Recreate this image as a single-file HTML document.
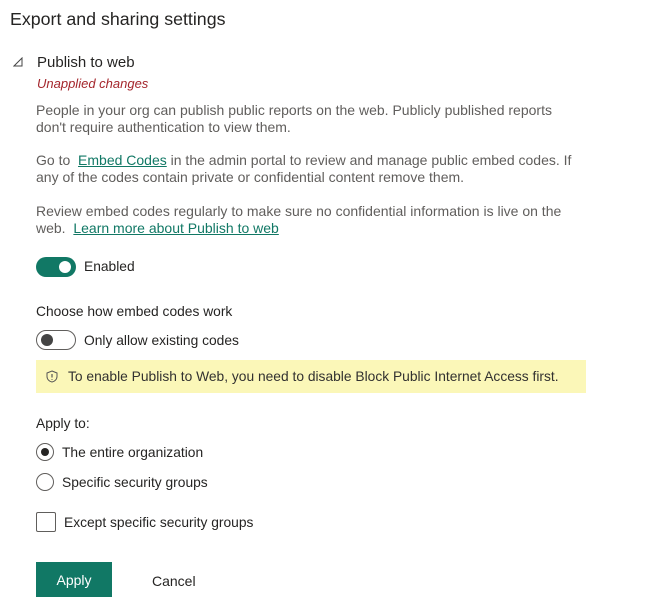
<!DOCTYPE html>
<html><head><style>
body{margin:0;width:660px;height:608px;background:#fff;font-family:"Liberation Sans",sans-serif;color:#252423;position:relative;overflow:hidden}
.a{position:absolute;white-space:nowrap}
.p{font-size:14px;color:#605e5c;line-height:17px}
.lk{color:#117865;text-decoration:underline}
</style></head><body>
<div class="a" style="left:10px;top:9px;font-size:17.8px;color:#252423">Export and sharing settings</div>
<svg class="a" style="left:13px;top:57px" width="10" height="10"><path d="M1 9 L9 9 L9 1 Z" fill="none" stroke="#444" stroke-width="1"/></svg>
<div class="a" style="left:37px;top:54px;font-size:15px">Publish to web</div>
<div class="a" style="left:37px;top:76px;font-size:13px;font-style:italic;color:#a4262c">Unapplied changes</div>
<div class="a p" style="left:36px;top:102px">People in your org can publish public reports on the web. Publicly published reports<br>don't require authentication to view them.</div>
<div class="a p" style="left:36px;top:152px">Go to&nbsp; <span class="lk">Embed Codes</span> in the admin portal to review and manage public embed codes. If<br>any of the codes contain private or confidential content remove them.</div>
<div class="a p" style="left:36px;top:203px">Review embed codes regularly to make sure no confidential information is live on the<br>web.&nbsp; <span class="lk">Learn more about Publish to web</span></div>
<div class="a" style="left:36px;top:257px;width:40px;height:20px;border-radius:10px;background:#117865"></div>
<div class="a" style="left:59px;top:261px;width:12px;height:12px;border-radius:6px;background:#fff"></div>
<div class="a" style="left:84px;top:259px;font-size:13.8px">Enabled</div>
<div class="a" style="left:36px;top:304px;font-size:13.8px">Choose how embed codes work</div>
<div class="a" style="left:36px;top:330px;width:38px;height:18px;border-radius:10px;border:1px solid #605e5c"></div>
<div class="a" style="left:41px;top:334px;width:12px;height:12px;border-radius:6px;background:#444"></div>
<div class="a" style="left:84px;top:333px;font-size:13.8px">Only allow existing codes</div>
<div class="a" style="left:36px;top:360px;width:550px;height:33px;background:#fbf7b8"></div>
<svg class="a" style="left:46px;top:370px" width="12" height="13"><path d="M6 1 L11 3 V6.5 C11 9.5 8.5 11.5 6 12 C3.5 11.5 1 9.5 1 6.5 V3 Z" fill="none" stroke="#555" stroke-width="1"/><path d="M6 4 V7.5 M6 9 V9.8" stroke="#555" stroke-width="1.2"/></svg>
<div class="a" style="left:68px;top:369px;font-size:13.8px;color:#323130">To enable Publish to Web, you need to disable Block Public Internet Access first.</div>
<div class="a" style="left:36px;top:416px;font-size:13.8px">Apply to:</div>
<div class="a" style="left:36px;top:443px;width:16px;height:16px;border-radius:50%;border:1px solid #605e5c"></div>
<div class="a" style="left:41px;top:448px;width:8px;height:8px;border-radius:50%;background:#252423"></div>
<div class="a" style="left:62px;top:445px;font-size:13.8px">The entire organization</div>
<div class="a" style="left:36px;top:473px;width:16px;height:16px;border-radius:50%;border:1px solid #605e5c"></div>
<div class="a" style="left:62px;top:475px;font-size:13.8px">Specific security groups</div>
<div class="a" style="left:36px;top:512px;width:18px;height:18px;border:1px solid #605e5c;border-radius:2px"></div>
<div class="a" style="left:64px;top:515px;font-size:13.8px">Except specific security groups</div>
<div class="a" style="left:36px;top:562px;width:76px;height:35px;background:#117865;color:#fff;font-size:14px;text-align:center;line-height:37px">Apply</div>
<div class="a" style="left:152px;top:573px;font-size:14px">Cancel</div>
</body></html>
